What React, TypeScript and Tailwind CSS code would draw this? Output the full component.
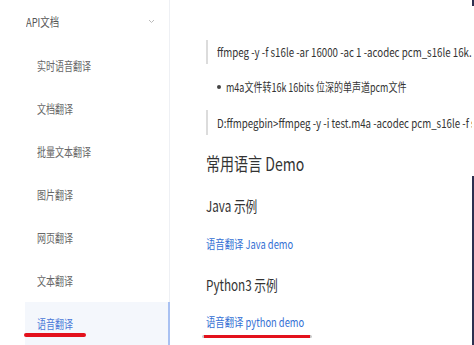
import React from "react";

const T = ({ children, className = "scale-x-[0.78]" }: { children: React.ReactNode; className?: string }) => (
  <span className={`inline-block origin-left whitespace-nowrap ${className}`}>{children}</span>
);

const items = ["实时语音翻译", "文档翻译", "批量文本翻译", "图片翻译", "网页翻译", "文本翻译"];

export default function App() {
  return (
    <div
      className="w-[474px] h-[345px] overflow-hidden flex bg-white"
      style={{ fontFamily: '"Noto Sans CJK SC", "Noto Sans", sans-serif' }}
    >
      {/* Sidebar */}
      <div className="w-[170px] shrink-0 border-r border-[#eef0f4] flex flex-col">
        <div className="h-[45px] pl-[26px] pr-[14px] flex items-center justify-between text-[12px] text-[#555]">
          <T>API文档</T>
          <svg width="7" height="5" viewBox="0 0 7 5" className="mt-[-2px]">
            <path d="M1 1 L3.5 3.5 L6 1" stroke="#bbb" strokeWidth="1" fill="none" />
          </svg>
        </div>
        {items.map((t) => (
          <div key={t} className="h-[43.4px] ml-[25px] pl-[12px] flex items-center text-[12px] text-[#666]">
            <T className="scale-x-[0.75]">{t}</T>
          </div>
        ))}
        <div className="relative h-[43.4px] ml-[25px] pl-[12px] flex items-center text-[12px] text-[#4a78d8] bg-[#f4f7fc] border-r-2 border-[#a9c1f2] mr-[-1px]">
          <T className="scale-x-[0.75]">语音翻译</T>
          <div className="absolute left-[-1px] top-[31px] w-[62px] h-[4px] rounded-full bg-[#e3111c]" />
        </div>
      </div>

      {/* Content */}
      <div className="flex-1 min-w-0 overflow-hidden pl-[36px] pt-[40px] flex flex-col text-[#333]">
        <div className="h-[24px] border-l-2 border-[#dcdcdc] pl-[9px] flex items-center text-[12px]">
          <T className="scale-x-[0.81]">ffmpeg -y -f s16le -ar 16000 -ac 1 -acodec pcm_s16le 16k.pcm</T>
        </div>
        <div className="mt-[13px] h-[20px] flex items-center text-[12px]">
          <div className="ml-[11px] w-[4px] h-[4px] rounded-full bg-[#444] shrink-0" />
          <div className="ml-[5px]">
            <T className="scale-x-[0.75]">m4a文件转16k 16bits 位深的单声道pcm文件</T>
          </div>
        </div>
        <div className="mt-[13px] h-[25px] border-l-2 border-[#dcdcdc] pl-[9px] flex items-center text-[12px]">
          <T className="scale-x-[0.81]">D:ffmpegbin&gt;ffmpeg -y -i test.m4a -acodec pcm_s16le -f s16le -ac 1 -ar 16000 16k.pcm</T>
        </div>
        <div className="mt-[16px] h-[24px] flex items-center text-[18px] text-[#333]">
          <T>常用语言 Demo</T>
        </div>
        <div className="mt-[21px] h-[20px] flex items-center text-[15px] text-[#333]">
          <T>Java 示例</T>
        </div>
        <div className="mt-[20px] h-[16px] flex items-center text-[12px] text-[#3370d4]">
          <T>语音翻译 Java demo</T>
        </div>
        <div className="mt-[23px] h-[20px] flex items-center text-[15px] text-[#333]">
          <T>Python3 示例</T>
        </div>
        <div className="mt-[19px] h-[16px] flex items-center text-[12px] text-[#3370d4]">
          <T>语音翻译 python demo</T>
        </div>
        <div className="mt-[5px] ml-[-4px] w-[110px] h-[3px] rounded-full bg-[#e3111c] border-x-2 border-[#c8c8c8]" />
      </div>

      {/* Right dark strip */}
      <div className="w-[2px] shrink-0 flex flex-col">
        <div className="h-[6px] bg-[#2d3050]" />
        <div className="h-[170px]" />
        <div className="flex-1 bg-[#2d3050]" />
      </div>
    </div>
  );
}
